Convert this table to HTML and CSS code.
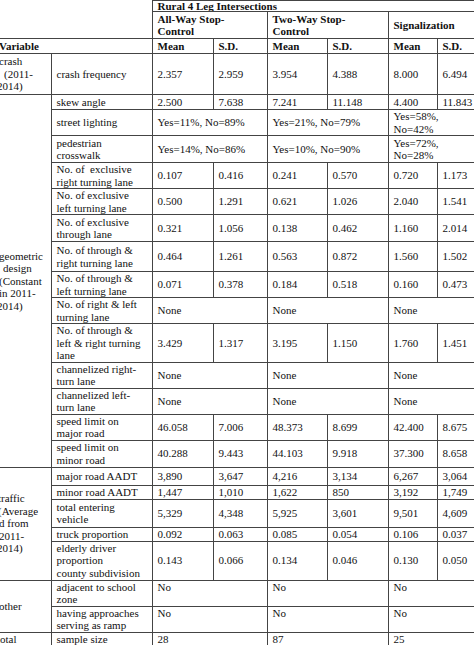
FILE: index.html
```html
<!DOCTYPE html>
<html>
<head>
<meta charset="utf-8">
<link rel="stylesheet" href="styles.css">
</head>
<body>
<table class="stats">
<colgroup>
<col class="c1"><col class="c2"><col class="c3"><col class="c4"><col class="c5"><col class="c6"><col class="c7"><col class="c8">
</colgroup>
<tr class="h11"><td class="blank" colspan="2" rowspan="2"></td><th colspan="6" class="title">Rural 4 Leg Intersections</th></tr>
<tr class="h27"><th colspan="2">All-Way Stop-<br>Control</th><th colspan="2">Two-Way Stop-<br>Control</th><th colspan="2">Signalization</th></tr>
<tr class="h15"><th colspan="2" class="grp">Variable</th><th>Mean</th><th>S.D.</th><th>Mean</th><th>S.D.</th><th>Mean</th><th>S.D.</th></tr>
<tr class="h41"><td class="grp"><span class="l">crash</span><span class="l i5">(2011-</span><span class="l n2">2014)</span></td><td>crash frequency</td><td>2.357</td><td>2.959</td><td>3.954</td><td>4.388</td><td>8.000</td><td>6.494</td></tr>
<tr class="h15"><td class="grp" rowspan="14"><span class="l">geometric</span><span class="l i4">design</span><span class="l">(Constant</span><span class="l">in 2011-</span><span class="l n2">2014)</span></td><td>skew angle</td><td>2.500</td><td>7.638</td><td>7.241</td><td>11.148</td><td>4.400</td><td>11.843</td></tr>
<tr class="h26"><td>street lighting</td><td colspan="2">Yes=11%, No=89%</td><td colspan="2">Yes=21%, No=79%</td><td colspan="2">Yes=58%,<br>No=42%</td></tr>
<tr class="h27"><td>pedestrian<br>crosswalk</td><td colspan="2">Yes=14%, No=86%</td><td colspan="2">Yes=10%, No=90%</td><td colspan="2">Yes=72%,<br>No=28%</td></tr>
<tr class="h25"><td>No. of&nbsp; exclusive<br>right turning lane</td><td>0.107</td><td>0.416</td><td>0.241</td><td>0.570</td><td>0.720</td><td>1.173</td></tr>
<tr class="h26"><td>No. of exclusive<br>left turning lane</td><td>0.500</td><td>1.291</td><td>0.621</td><td>1.026</td><td>2.040</td><td>1.541</td></tr>
<tr class="h27"><td>No. of exclusive<br>through lane</td><td>0.321</td><td>1.056</td><td>0.138</td><td>0.462</td><td>1.160</td><td>2.014</td></tr>
<tr class="h30"><td>No. of through &amp;<br>right turning lane</td><td>0.464</td><td>1.261</td><td>0.563</td><td>0.872</td><td>1.560</td><td>1.502</td></tr>
<tr class="h26"><td>No. of through &amp;<br>left turning lane</td><td>0.071</td><td>0.378</td><td>0.184</td><td>0.518</td><td>0.160</td><td>0.473</td></tr>
<tr class="h26"><td>No. of right &amp; left<br>turning lane</td><td colspan="2">None</td><td colspan="2">None</td><td colspan="2">None</td></tr>
<tr class="h38"><td>No. of through &amp;<br>left &amp; right turning<br>lane</td><td>3.429</td><td>1.317</td><td>3.195</td><td>1.150</td><td>1.760</td><td>1.451</td></tr>
<tr class="h26"><td>channelized right-<br>turn lane</td><td colspan="2">None</td><td colspan="2">None</td><td colspan="2">None</td></tr>
<tr class="h26"><td>channelized left-<br>turn lane</td><td colspan="2">None</td><td colspan="2">None</td><td colspan="2">None</td></tr>
<tr class="h26"><td>speed limit on<br>major road</td><td>46.058</td><td>7.006</td><td>48.373</td><td>8.699</td><td>42.400</td><td>8.675</td></tr>
<tr class="h27"><td>speed limit on<br>minor road</td><td>40.288</td><td>9.443</td><td>44.103</td><td>9.918</td><td>37.300</td><td>8.658</td></tr>
<tr class="h18"><td class="grp" rowspan="5"><span class="l n1">traffic</span><span class="l n1">(Average</span><span class="l">d from</span><span class="l">2011-</span><span class="l n2">2014)</span></td><td>major road AADT</td><td>3,890</td><td>3,647</td><td>4,216</td><td>3,134</td><td>6,267</td><td>3,064</td></tr>
<tr class="h14"><td>minor road AADT</td><td>1,447</td><td>1,010</td><td>1,622</td><td>850</td><td>3,192</td><td>1,749</td></tr>
<tr class="h28"><td>total entering<br>vehicle</td><td>5,329</td><td>4,348</td><td>5,925</td><td>3,601</td><td>9,501</td><td>4,609</td></tr>
<tr class="h14"><td>truck proportion</td><td>0.092</td><td>0.063</td><td>0.085</td><td>0.054</td><td>0.106</td><td>0.037</td></tr>
<tr class="h39"><td>elderly driver<br>proportion<br>county subdivision</td><td>0.143</td><td>0.066</td><td>0.134</td><td>0.046</td><td>0.130</td><td>0.050</td></tr>
<tr class="h26"><td class="grp" rowspan="2"><span class="l">other</span></td><td>adjacent to school<br>zone</td><td colspan="2" class="top">No</td><td colspan="2" class="top">No</td><td colspan="2" class="top">No</td></tr>
<tr class="h26"><td>having approaches<br>serving as ramp</td><td colspan="2" class="top">No</td><td colspan="2" class="top">No</td><td colspan="2" class="top">No</td></tr>
<tr class="h22"><td class="grp top"><span class="l n2">total</span></td><td class="top">sample size</td><td colspan="2" class="top">28</td><td colspan="2" class="top">87</td><td colspan="2" class="top">25</td></tr>
</table>
</body>
</html>
```
FILE: styles.css
```css
html, body {
  margin: 0;
  padding: 0;
  background: #fff;
  overflow: hidden;
}

.stats {
  border-collapse: collapse;
  table-layout: fixed;
  width: 480px;
  margin-left: -3px;
  font-family: "Liberation Serif", "Times New Roman", serif;
  font-size: 11px;
  line-height: 12.5px;
  color: #111;
}

.c1 { width: 54px; }
.c2 { width: 101px; }
.c3 { width: 61px; }
.c4 { width: 54px; }
.c5 { width: 60px; }
.c6 { width: 61px; }
.c7 { width: 49px; }
.c8 { width: 40px; }

.stats td,
.stats th {
  border: 1px solid #444;
  padding: 0 4px 0 5px;
  text-align: left;
  vertical-align: middle;
  font-weight: normal;
  overflow: hidden;
  white-space: nowrap;
}

.stats th {
  font-weight: bold;
}

.stats .blank {
  border-top: none;
  border-left: none;
}

.stats .title {
  line-height: 10px;
  padding-top: 0;
  padding-bottom: 0;
}

.stats .grp {
  border-left: none;
  padding-left: 2px;
  padding-right: 0;
}

.stats .top {
  vertical-align: top;
}

.l {
  display: block;
}

.i4 { padding-left: 4px; }
.i5 { padding-left: 5px; }
.n1 { margin-left: -1px; }
.n2 { margin-left: -2px; }

.h11 { height: 11px; }
.h14 { height: 14px; }
.h15 { height: 15px; }
.h18 { height: 18px; }
.h22 { height: 22px; }
.h25 { height: 25px; }
.h26 { height: 26px; }
.h27 { height: 27px; }
.h28 { height: 28px; }
.h30 { height: 30px; }
.h38 { height: 38px; }
.h39 { height: 39px; }
.h41 { height: 41px; }
```
